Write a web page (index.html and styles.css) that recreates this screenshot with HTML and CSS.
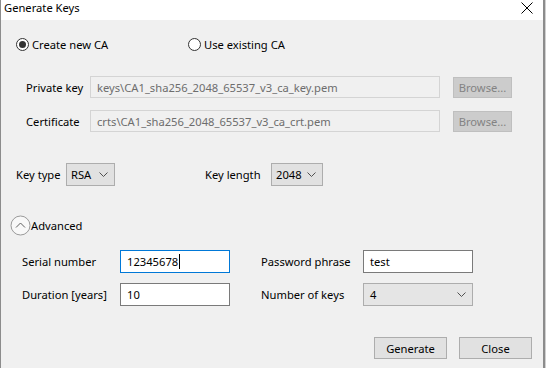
FILE: index.html
```html
<!DOCTYPE html>
<html>
<head>
<meta charset="utf-8">
<link rel="stylesheet" href="styles.css">
</head>
<body>
<div class="dialog">
  <div class="titlebar">
    <span class="title">Generate Keys</span>
    <svg class="close" width="12" height="12" viewBox="0 0 12 12"><path d="M0.5 0.5L11.5 11.5M11.5 0.5L0.5 11.5" stroke="#000" stroke-width="1"/></svg>
  </div>
  <div class="content">
    <div class="radios">
      <div class="radio first"><span class="circle checked"></span><span>Create new CA</span></div>
      <div class="radio"><span class="circle"></span><span>Use existing CA</span></div>
    </div>
    <div class="files">
      <div class="file-row">
        <span class="file-label">Private key</span>
        <div class="field disabled">keys\CA1_sha256_2048_65537_v3_ca_key.pem</div>
        <div class="btn disabled-btn">Browse...</div>
      </div>
      <div class="file-row">
        <span class="file-label">Certificate</span>
        <div class="field disabled">crts\CA1_sha256_2048_65537_v3_ca_crt.pem</div>
        <div class="btn disabled-btn">Browse...</div>
      </div>
    </div>
    <div class="keys">
      <span class="kt-label">Key type</span>
      <div class="combo kt-combo"><span>RSA</span><svg class="chev" width="9" height="5" viewBox="0 0 9 5"><path d="M0.5 0.5L4.5 4.5L8.5 0.5" fill="none" stroke="#505050" stroke-width="1"/></svg></div>
      <span class="kl-label">Key length</span>
      <div class="combo kl-combo"><span>2048</span><svg class="chev" width="9" height="5" viewBox="0 0 9 5"><path d="M0.5 0.5L4.5 4.5L8.5 0.5" fill="none" stroke="#505050" stroke-width="1"/></svg></div>
    </div>
    <div class="advanced">
      <svg class="adv-icon" width="21" height="21" viewBox="0 0 21 21"><circle cx="10.5" cy="10.5" r="9.5" fill="#f8f8f8" stroke="#9a9a9a" stroke-width="1"/><path d="M6 12.5L10.5 8L15 12.5" fill="none" stroke="#606060" stroke-width="1"/></svg>
      <span>Advanced</span>
    </div>
    <div class="params">
      <span class="p-label">Serial number</span>
      <div class="field edit focused">12345678<span class="caret"></span></div>
      <span class="p-label second">Password phrase</span>
      <div class="field edit">test</div>
      <span class="p-label">Duration [years]</span>
      <div class="field edit">10</div>
      <span class="p-label second">Number of keys</span>
      <div class="combo nk-combo"><span>4</span><svg class="chev" width="9" height="5" viewBox="0 0 9 5"><path d="M0.5 0.5L4.5 4.5L8.5 0.5" fill="none" stroke="#505050" stroke-width="1"/></svg></div>
    </div>
    <div class="buttons">
      <div class="btn action">Generate</div>
      <div class="btn action">Close</div>
    </div>
  </div>
</div>
</body>
</html>
```
FILE: styles.css
```css
html, body {
  margin: 0;
  padding: 0;
  background: #d0d0d0;
}
body {
  width: 546px;
  height: 368px;
  overflow: hidden;
  font-family: "Noto Sans", "Open Sans", sans-serif;
  font-size: 11.2px;
  color: #000;
}
.dialog {
  width: 542px;
  height: 368px;
  background: #f0f0f0;
  border-left: 1px solid #8c8c8c;
  border-right: 2px solid #8c8c8c;
  box-sizing: content-box;
}
.titlebar {
  height: 20px;
  background: #fff;
  display: flex;
  align-items: center;
  justify-content: space-between;
  padding-left: 3px;
  padding-right: 10px;
}
.title {
  line-height: 16px;
  margin-top: -4px;
}
.close {
  margin-top: -4px;
}
.radios {
  display: flex;
  align-items: center;
  height: 16px;
  margin-top: 16px;
  padding-left: 15px;
}
.radio {
  display: flex;
  align-items: center;
  gap: 3px;
}
.radio.first {
  width: 172px;
}
.circle {
  width: 11px;
  height: 11px;
  border: 1px solid #333;
  border-radius: 50%;
  background: #fff;
  position: relative;
}
.circle.checked::after {
  content: "";
  position: absolute;
  left: 2px;
  top: 2px;
  width: 7px;
  height: 7px;
  border-radius: 50%;
  background: #333;
}
.files {
  margin-top: 24px;
  padding-left: 25px;
  display: flex;
  flex-direction: column;
  gap: 12px;
}
.file-row {
  display: flex;
  align-items: center;
  height: 22px;
}
.file-label {
  width: 64px;
}
.field {
  box-sizing: border-box;
  height: 22px;
  border: 1px solid #d9d9d9;
  display: flex;
  align-items: center;
  padding-left: 6px;
  white-space: nowrap;
  overflow: hidden;
}
.field.disabled {
  width: 350px;
  color: #6d6d6d;
  background: #f0f0f0;
  border-color: #d4d4d4;
}
.btn {
  box-sizing: border-box;
  display: flex;
  align-items: center;
  justify-content: center;
  border: 1px solid #adadad;
  background: #e1e1e1;
  height: 21px;
}
.disabled-btn {
  width: 59px;
  margin-left: 13px;
  background: #cccccc;
  border-color: #bfbfbf;
  color: #838383;
}
.keys {
  display: flex;
  align-items: center;
  height: 23px;
  margin-top: 31px;
  padding-left: 15px;
}
.kt-label {
  width: 50px;
}
.combo {
  box-sizing: border-box;
  height: 23px;
  border: 1px solid #adadad;
  background: #e1e1e1;
  display: flex;
  align-items: center;
  justify-content: space-between;
  padding-left: 4px;
  padding-right: 6px;
}
.kt-combo {
  width: 49px;
}
.kl-label {
  margin-left: 90px;
  width: 66px;
}
.kl-combo {
  width: 52px;
}
.nk-combo {
  width: 110px;
  background: #e5e5e5;
  border-color: #adadad;
  padding-left: 6px;
}
.advanced {
  display: flex;
  align-items: center;
  gap: 0;
  height: 21px;
  margin-top: 29px;
  padding-left: 9px;
}
.params {
  display: grid;
  grid-template-columns: 98px 110px 133px 110px;
  grid-auto-rows: 23px;
  row-gap: 10px;
  align-items: center;
  margin-top: 14px;
  padding-left: 21px;
}
.p-label.second {
  margin-left: 31px;
}
.field.edit {
  width: 110px;
  height: 23px;
  background: #fff;
  border-color: #7a7a7a;
  padding-left: 6px;
}
.field.focused {
  border-color: #0078d7;
}
.caret {
  display: inline-block;
  width: 1px;
  height: 15px;
  background: #000;
  margin-left: 1px;
}
.buttons {
  display: flex;
  justify-content: flex-end;
  gap: 12px;
  margin-top: 31px;
  padding-right: 11px;
}
.btn.action {
  width: 73px;
  height: 22px;
}
```
